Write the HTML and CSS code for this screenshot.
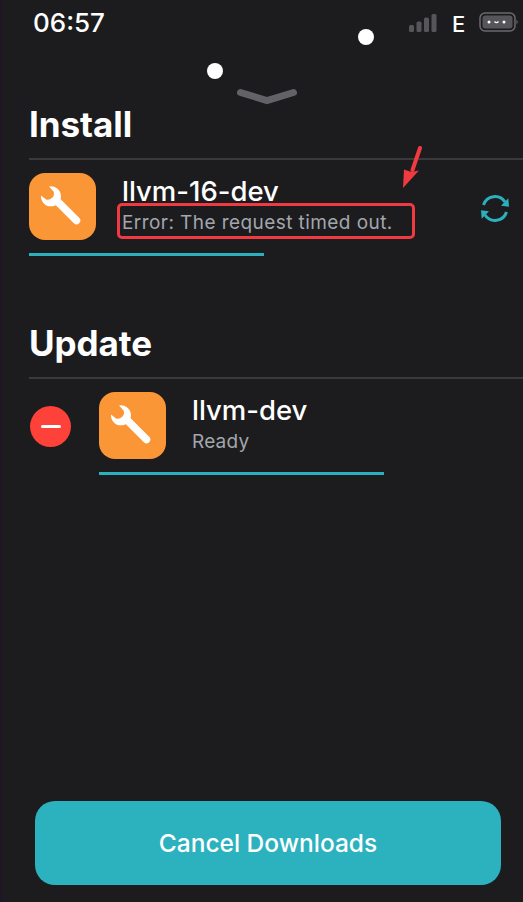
FILE: index.html
```html
<!DOCTYPE html>
<html lang="en">
<head>
<meta charset="utf-8">
<title>Downloads</title>
<link rel="stylesheet" href="styles.css">
</head>
<body>
<main class="screen">
  <header class="status">
    <span class="time">06:57</span>
    <div class="status-right">
      <svg class="signal" width="28" height="18" viewBox="0 0 28 18"><g fill="#56565a"><rect x="0" y="11" width="5" height="7" rx="1.5"/><rect x="7.5" y="7.5" width="5" height="10.5" rx="1.5"/><rect x="15" y="3.5" width="5" height="14.5" rx="1.5"/><rect x="22.500" y="0" width="5" height="18" rx="1.500"/></g></svg>
      <span class="net">E</span>
      <svg class="battery" width="39" height="20" viewBox="0 0 39 20"><rect x="1" y="1" width="35" height="18" rx="5" fill="none" stroke="#6a6a6e" stroke-width="1.500"/><rect x="3.500" y="3.500" width="30" height="13" rx="3" fill="#56565a"/><circle cx="10" cy="10" r="1.500" fill="#fff"/><circle cx="25" cy="10" r="1.500" fill="#fff"/><path d="M15.500 9.500q2 2.400 4 0" fill="none" stroke="#fff" stroke-width="1.200"/><path d="M37.500 7.500l1.500 2.500-1.500 2.500z" fill="#6a6a6e"/></svg>
    </div>
  </header>

  <div class="handle">
    <svg width="62" height="18" viewBox="0 0 62 18"><path d="M4.500 4.500 31 12.500 57.500 4.500" fill="none" stroke="#636367" stroke-width="7" stroke-linecap="round" stroke-linejoin="miter"/></svg>
  </div>

  <section class="section section-install">
    <h2 class="title">Install</h2>
    <div class="rule"></div>
    <div class="row">
      <div class="app-icon"><svg width="67" height="67" viewBox="0 0 67 67"><path d="M20 13.500A10 10 0 1 1 12 22.500L17 26.500Q20.500 27.500 23.500 24.500Q26 21.500 24.500 18.500z" fill="#fff"/><path d="M27 27 47.500 47.500" stroke="#fff" stroke-width="7.500" stroke-linecap="round"/></svg></div>
      <div class="text">
        <div class="name">llvm-16-dev</div>
        <div class="sub">Error: The request timed out.</div>
      </div>
      <svg class="retry" width="32" height="32" viewBox="0 0 32 32" fill="none"><path d="M4.500 12A12 12 0 0 1 26 9" stroke="#2bb0be" stroke-width="3"/><path d="M22 12.700 30 13.700 29.300 5.300z" fill="#2bb0be"/><path d="M27.500 19A12 12 0 0 1 6 22" stroke="#2bb0be" stroke-width="3"/><path d="M10 18.300 2 17.300 2.700 25.700z" fill="#2bb0be"/></svg>
    </div>
    <div class="progress progress-install"></div>
  </section>

  <section class="section section-update">
    <h2 class="title">Update</h2>
    <div class="rule"></div>
    <div class="row row-update">
      <div class="remove"><span></span></div>
      <div class="app-icon"><svg width="67" height="67" viewBox="0 0 67 67"><path d="M20 13.500A10 10 0 1 1 12 22.500L17 26.500Q20.500 27.500 23.500 24.500Q26 21.500 24.500 18.500z" fill="#fff"/><path d="M27 27 47.500 47.500" stroke="#fff" stroke-width="7.500" stroke-linecap="round"/></svg></div>
      <div class="text">
        <div class="name">llvm-dev</div>
        <div class="sub sub-ready">Ready</div>
      </div>
    </div>
    <div class="progress progress-update"></div>
  </section>

  <button class="cancel">Cancel Downloads</button>

  <span class="dot dot-a"></span>
  <span class="dot dot-b"></span>
  <svg class="arrow" width="24" height="44" viewBox="0 0 24 44"><path d="M20 2 12.500 24" stroke="#ef3a3f" stroke-width="4" stroke-linecap="round"/><path d="M3 42 4 23.500 11.500 26 19 24.500z" fill="#ef3a3f"/></svg>
  <div class="callout"></div>
</main>
</body>
</html>
```
FILE: styles.css
```css
* { box-sizing: border-box; }
html, body { margin: 0; padding: 0; background: #1c1c1e; }
body { width: 523px; height: 902px; overflow: hidden; font-family: Inter, "Noto Sans", sans-serif; color: #fff; }
.screen { position: relative; width: 523px; height: 902px; display: flex; flex-direction: column; background: #1c1c1e; border-left: 2px solid #1e1526; }

.status { height: 46px; padding: 0 5px 0 31px; display: flex; align-items: center; justify-content: space-between; }
.time { font-size: 26px; font-weight: 500; line-height: 46px; }
.status-right { display: flex; align-items: center; margin-top: 1px; }
.signal { margin-right: 15px; margin-top: -2px; }
.net { font-size: 22px; font-weight: 500; width: 17px; margin-right: 10px; }
.battery { display: block; margin-top: -3px; }

.handle { height: 23px; margin-top: 42px; padding-left: 234px; line-height: 0; }

.section { display: flex; flex-direction: column; }
.section-install { margin-top: -8px; }
.section-update { margin-top: 66px; }
.title { margin: 0; padding-left: 27px; font-size: 35px; line-height: 42px; font-weight: 700; letter-spacing: -0.05px; }
.rule { height: 2px; margin: 13px 0 0 27px; background: #3a3a3c; }

.row { display: flex; align-items: flex-start; padding: 13px 0 0 27px; height: 93px; }
.app-icon { flex: none; width: 67px; height: 67px; border-radius: 16px; background: #fb9636; }
.app-icon svg { display: block; }
.text { margin-left: 26px; }
.name { font-size: 27.500px; line-height: 30px; font-weight: 500; margin-top: 3px; }
.sub { font-size: 19px; line-height: 24px; color: #a3a6ad; letter-spacing: 0.43px; margin-top: 5px; }
.sub-ready { letter-spacing: 0.2px; }
.retry { margin: 20px 12px 0 auto; }

.row-update { padding-left: 28px; }
.remove { flex: none; width: 41px; height: 41px; margin-top: 14px; margin-right: 28px; border-radius: 50%; background: #fe4139; display: flex; align-items: center; justify-content: center; }
.remove span { width: 20px; height: 3.500px; border-radius: 2px; background: #fff; }

.progress { height: 3px; background: #2bb0be; }
.progress-install { width: 235px; margin-left: 27px; }
.progress-update { width: 285px; margin-left: 97px; }

.cancel { align-self: flex-start; margin: auto 0 17px 33px; width: 466px; height: 84px; border: 0; border-radius: 20px; background: #2cb1be; color: #fff; font-family: inherit; font-size: 24.500px; font-weight: 500; }

.dot { position: absolute; width: 16px; height: 16px; border-radius: 50%; background: #fff; }
.dot-a { left: 356px; top: 29px; }
.dot-b { left: 205px; top: 63px; }
.arrow { position: absolute; left: 398px; top: 146px; }
.callout { position: absolute; left: 115px; top: 203px; width: 298px; height: 36px; border: 3px solid #ee3a40; border-radius: 5px; }
```
